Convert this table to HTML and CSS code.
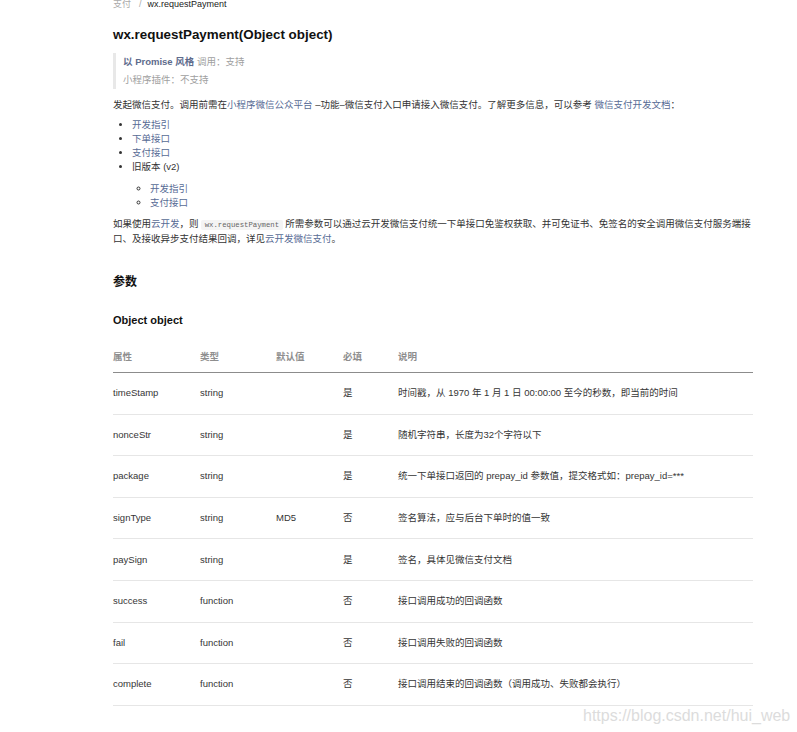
FILE: index.html
```html
<!DOCTYPE html>
<html lang="zh-CN">
<head>
<meta charset="utf-8">
<title>wx.requestPayment</title>
<link rel="stylesheet" href="styles.css">
</head>
<body>
<div class="page">
  <div class="crumb"><span class="crumb-parent">支付</span><span class="crumb-sep">/</span><span class="crumb-cur">wx.requestPayment</span></div>
  <h1 class="title">wx.requestPayment(Object object)</h1>
  <div class="note">
    <p><a class="note-link">以 Promise 风格</a> 调用：支持</p>
    <p>小程序插件：不支持</p>
  </div>
  <p class="para">发起微信支付。调用前需在<a>小程序微信公众平台</a> –功能–微信支付入口申请接入微信支付。了解更多信息，可以参考 <a>微信支付开发文档</a>：</p>
  <ul class="list">
    <li><a>开发指引</a></li>
    <li><a>下单接口</a></li>
    <li><a>支付接口</a></li>
    <li>旧版本 (v2)
      <ul class="sublist">
        <li><a>开发指引</a></li>
        <li><a>支付接口</a></li>
      </ul>
    </li>
  </ul>
  <p class="para para2">如果使用<a>云开发</a>，则 <code class="code">wx.requestPayment</code> 所需参数可以通过云开发微信支付统一下单接口免鉴权获取、并可免证书、免签名的安全调用微信支付服务端接口、及接收异步支付结果回调，详见<a>云开发微信支付</a>。</p>
  <h2 class="h2">参数</h2>
  <h3 class="h3">Object object</h3>
  <table class="params">
    <colgroup>
      <col class="c1"><col class="c2"><col class="c3"><col class="c4"><col>
    </colgroup>
    <thead>
      <tr><th>属性</th><th>类型</th><th>默认值</th><th>必填</th><th>说明</th></tr>
    </thead>
    <tbody>
      <tr><td>timeStamp</td><td>string</td><td></td><td>是</td><td>时间戳，从 1970 年 1 月 1 日 00:00:00 至今的秒数，即当前的时间</td></tr>
      <tr><td>nonceStr</td><td>string</td><td></td><td>是</td><td>随机字符串，长度为32个字符以下</td></tr>
      <tr><td>package</td><td>string</td><td></td><td>是</td><td>统一下单接口返回的 prepay_id 参数值，提交格式如：prepay_id=***</td></tr>
      <tr><td>signType</td><td>string</td><td>MD5</td><td>否</td><td>签名算法，应与后台下单时的值一致</td></tr>
      <tr><td>paySign</td><td>string</td><td></td><td>是</td><td>签名，具体见微信支付文档</td></tr>
      <tr><td>success</td><td>function</td><td></td><td>否</td><td>接口调用成功的回调函数</td></tr>
      <tr><td>fail</td><td>function</td><td></td><td>否</td><td>接口调用失败的回调函数</td></tr>
      <tr><td>complete</td><td>function</td><td></td><td>否</td><td>接口调用结束的回调函数（调用成功、失败都会执行）</td></tr>
    </tbody>
  </table>
</div>
<div class="watermark">https://blog.csdn.net/hui_web</div>
</body>
</html>
```
FILE: styles.css
```css
html, body {
  margin: 0;
  padding: 0;
  background: #fff;
}
body {
  font-family: "Liberation Sans", "Noto Sans CJK SC", sans-serif;
  font-size: 9.5px;
  color: #333;
  overflow: hidden;
  position: relative;
  height: 732px;
}
a {
  color: #576b95;
  text-decoration: none;
}
.page {
  padding-left: 113px;
  width: 640px;
}
.crumb {
  font-size: 9px;
  line-height: 9px;
  height: 9px;
  color: #222;
}
.crumb-parent {
  color: #aaa;
}
.crumb-sep {
  color: #aaa;
  margin: 0 6px 0 8px;
}
.title {
  margin: 17px 0 0;
  font-size: 13.4px;
  line-height: 18px;
  font-weight: bold;
  color: #111;
}
.note {
  margin-top: 9px;
  border-left: 3px solid #e8e8e8;
  padding-left: 7px;
  color: #a0a0a0;
}
.note p {
  margin: 0;
  line-height: 18px;
}
.note-link {
  font-weight: bold;
  color: #5e6b8c;
}
.para {
  margin: 8px 0 0;
  line-height: 15px;
}
.para2 {
  margin-top: 6px;
}
.list {
  margin: 6px 0 0;
  padding-left: 19px;
  line-height: 14px;
}
.sublist {
  margin: 8px 0 0;
  padding-left: 18px;
  list-style: circle;
}
.code {
  font-family: "Liberation Mono", monospace;
  font-size: 7.3px;
  line-height: 10px;
  color: #666;
  background: #f4f4f4;
  padding: 1px 3.5px;
  border-radius: 2px;
}
.h2 {
  margin: 28px 0 0;
  font-size: 12px;
  line-height: 16px;
  font-weight: bold;
  color: #111;
}
.h3 {
  margin: 22px 0 0;
  font-size: 11px;
  line-height: 16px;
  font-weight: bold;
  color: #111;
}
.params {
  margin-top: 14px;
  width: 640px;
  border-collapse: separate;
  border-spacing: 0;
  table-layout: fixed;
}
.c1 { width: 87px; }
.c2 { width: 76px; }
.c3 { width: 67px; }
.c4 { width: 55px; }
.params th {
  text-align: left;
  padding: 8px 0;
  line-height: 14px;
  color: #8e8e8e;
  font-weight: bold;
  border-bottom: 1px solid #8c8c8c;
}
.params td {
  padding: 13.3px 0;
  line-height: 14px;
  color: #353535;
  border-bottom: 1px solid #e6e6e6;
  white-space: nowrap;
}
.watermark {
  position: absolute;
  left: 583px;
  top: 706px;
  font-size: 16px;
  line-height: 20px;
  color: #dcdcdc;
  white-space: nowrap;
}
```
